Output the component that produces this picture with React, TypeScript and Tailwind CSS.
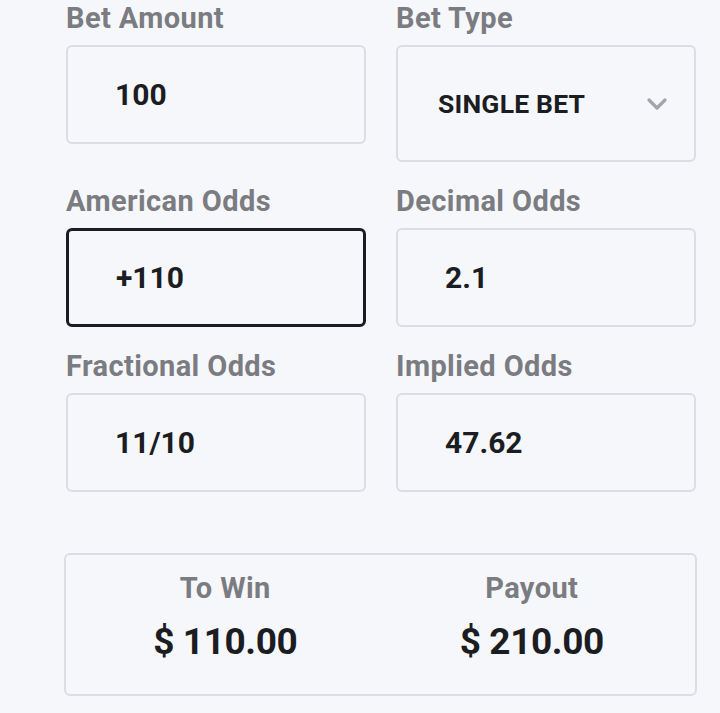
import { ChevronDown } from "lucide-react";

const labelCls = "text-[29px] leading-[37px] font-bold text-[#7b7c81] tracking-[0.4px]";

const Field = ({ label, value, active }: { label: string; value: string; active?: boolean }) => (
  <div className="flex flex-col">
    <label className={labelCls}>{label}</label>
    <div
      className={`mt-[8px] h-[99px] rounded-[6px] flex items-center pl-[47px] ${
        active ? "border-[3px] border-[#1c1d22]" : "border-2 border-[#dcdde2]"
      }`}
    >
      <span className="text-[30px] font-bold text-[#1c1d22]">{value}</span>
    </div>
  </div>
);

const App = () => {
  return (
    <main
      className="min-h-[713px] w-[720px] bg-[#f6f7fb] pl-[64px] pr-[23px]"
      style={{ fontFamily: "Roboto, 'Liberation Sans', sans-serif" }}
    >
      <div className="grid grid-cols-[300px_300px] gap-x-[30px] gap-y-[21px] pl-[2px] items-start">
        <Field label="Bet Amount" value="100" />
        <div className="flex flex-col">
          <label className={labelCls}>Bet Type</label>
          <div className="mt-[8px] h-[117px] rounded-[6px] border-2 border-[#dcdde2] flex items-center justify-between pl-[40px] pr-[21px]">
            <span className="text-[26.5px] font-bold text-[#1c1d22] tracking-[0.2px]">SINGLE BET</span>
            <ChevronDown className="w-[32px] h-[32px] text-[#a3a4a9]" strokeWidth={2.4} />
          </div>
        </div>
        <Field label="American Odds" value="+110" active />
        <Field label="Decimal Odds" value="2.1" />
        <Field label="Fractional Odds" value="11/10" />
        <Field label="Implied Odds" value="47.62" />
      </div>

      <div className="mt-[61px] h-[143px] rounded-[6px] border-2 border-[#dcdde2] grid grid-cols-[1fr_1fr] pt-[15px] pl-[6px] pr-[10px]">
        <div className="flex flex-col items-center">
          <span className={labelCls}>To Win</span>
          <span className="mt-[13px] text-[37px] leading-[44px] font-bold text-[#1c1d22] tracking-[-0.4px]">$ 110.00</span>
        </div>
        <div className="flex flex-col items-center">
          <span className={labelCls}>Payout</span>
          <span className="mt-[13px] text-[37px] leading-[44px] font-bold text-[#1c1d22] tracking-[-0.4px]">$ 210.00</span>
        </div>
      </div>
    </main>
  );
};

export default App;
